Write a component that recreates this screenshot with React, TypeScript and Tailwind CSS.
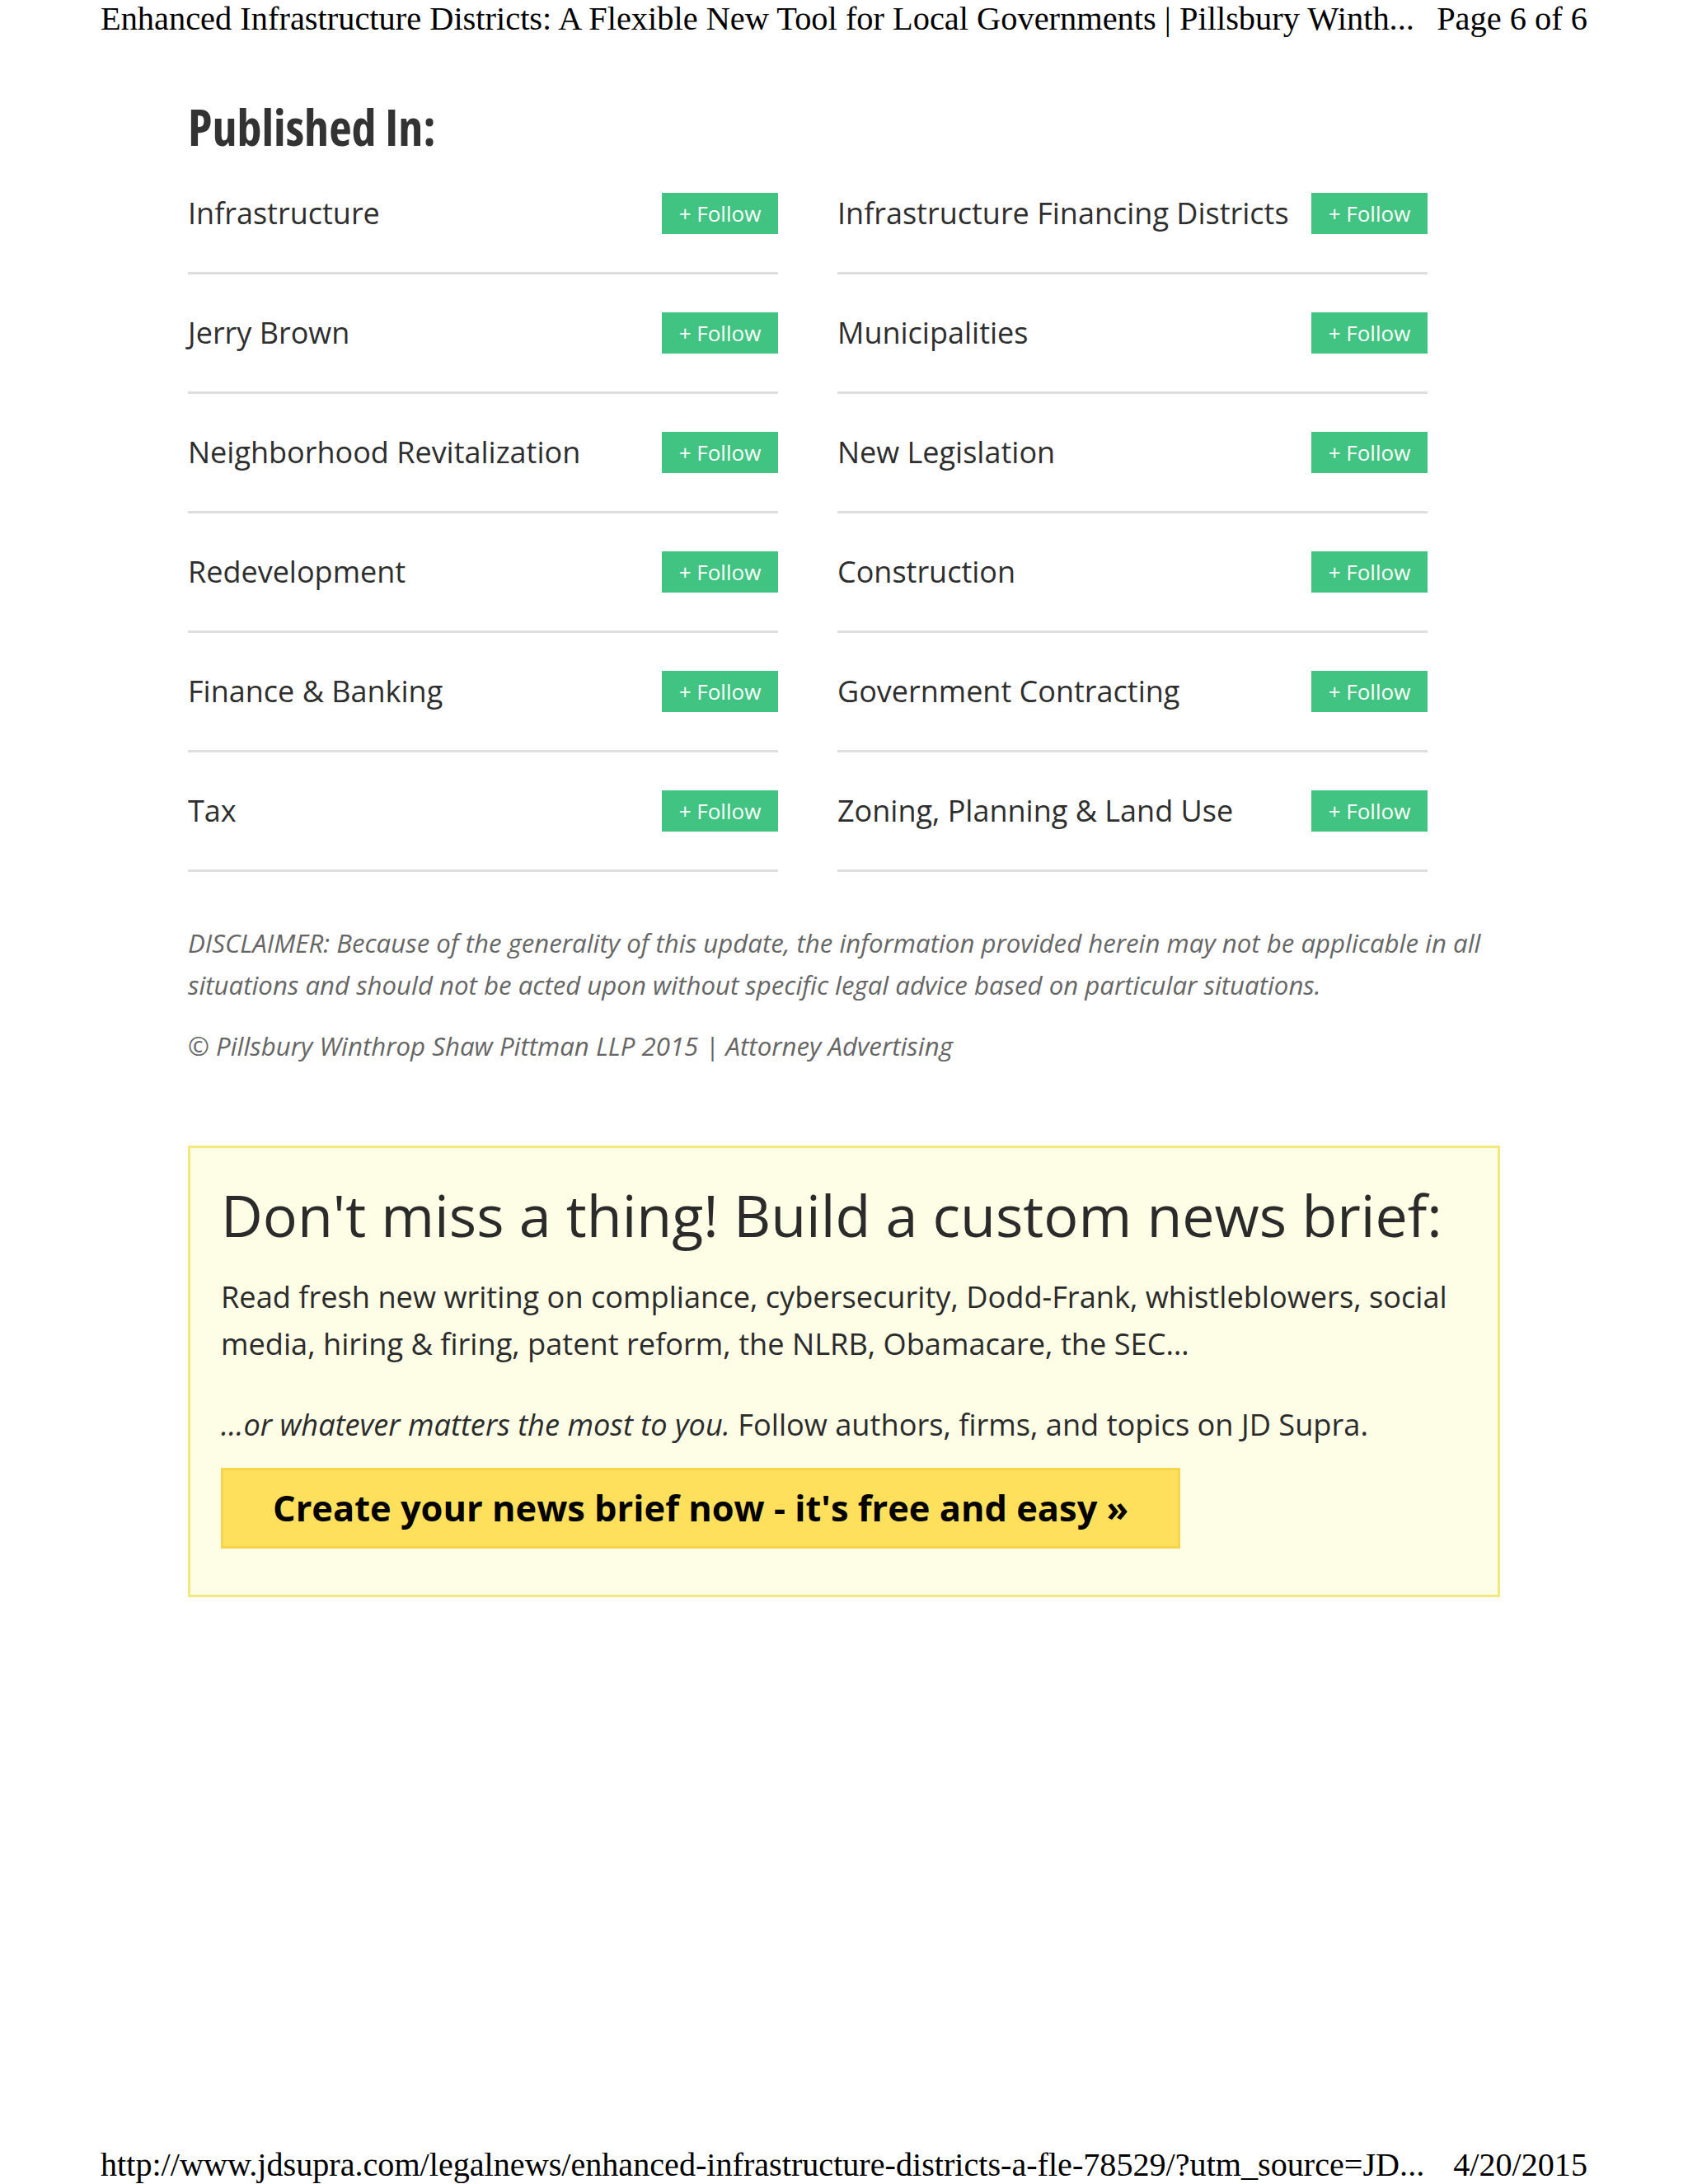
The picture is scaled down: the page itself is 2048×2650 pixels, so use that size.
import React from 'react';

const topics: [string, string][] = [
  ['Infrastructure', 'Infrastructure Financing Districts'],
  ['Jerry Brown', 'Municipalities'],
  ['Neighborhood Revitalization', 'New Legislation'],
  ['Redevelopment', 'Construction'],
  ['Finance & Banking', 'Government Contracting'],
  ['Tax', 'Zoning, Planning & Land Use'],
];

function TopicRow({ name }: { name: string }) {
  return (
    <div className="flex h-[145px] items-center justify-between border-b-[3px] border-[#dedede]">
      <span className="text-[36px] text-[#2e2e2e]">{name}</span>
      <button className="flex h-[50px] w-[141px] items-center justify-center bg-[#41c381] text-[26px] text-white">
        + Follow
      </button>
    </div>
  );
}

export default function App() {
  return (
    <div className="flex h-[2650px] w-[2048px] flex-col bg-white font-['Open_Sans',sans-serif]">
      {/* print header */}
      <div className="flex justify-between px-[122px] font-['Liberation_Serif',serif] text-[40.4px] leading-[46px] text-black">
        <span>Enhanced Infrastructure Districts: A Flexible New Tool for Local Governments | Pillsbury Winth...</span>
        <span>Page 6 of 6</span>
      </div>

      <div className="ml-[228px] w-[1592px]">
        <h2 className="mt-[78px] mb-[4px] text-[60px] leading-none font-bold font-stretch-condensed text-[#333]">
          Published In:
        </h2>

        <div className="grid w-[1504px] grid-cols-2 gap-x-[72px]">
          {topics.map(([left, right]) => (
            <React.Fragment key={left}>
              <TopicRow name={left} />
              <TopicRow name={right} />
            </React.Fragment>
          ))}
        </div>

        <p className="mt-[61px] text-[31.2px] leading-[51px] text-[#666] italic">
          DISCLAIMER: Because of the generality of this update, the information provided herein may not be applicable in all
          situations and should not be acted upon without specific legal advice based on particular situations.
        </p>
        <p className="mt-[23px] text-[31.2px] leading-[51px] text-[#666] italic">
          © Pillsbury Winthrop Shaw Pittman LLP 2015 | Attorney Advertising
        </p>

        {/* news brief promo */}
        <div className="mt-[95px] border-[3px] border-[#f4e87c] bg-[#fefde5] px-[37px] pt-[39px] pb-[56px]">
          <h3 className="text-[70px] leading-[84px] text-[#2b2b2b]">Don't miss a thing! Build a custom news brief:</h3>
          <p className="mt-[29px] text-[36.2px] leading-[57px] text-[#2b2b2b]">
            Read fresh new writing on compliance, cybersecurity, Dodd-Frank, whistleblowers, social media, hiring &amp;
            firing, patent reform, the NLRB, Obamacare, the SEC…
          </p>
          <p className="mt-[41px] text-[36.2px] leading-[57px] text-[#2b2b2b]">
            <em>…or whatever matters the most to you.</em> Follow authors, firms, and topics on JD Supra.
          </p>
          <div className="mt-[24px] inline-flex h-[98px] items-center border-[3px] border-[#f6d54c] bg-[#ffe05c] px-[60px] text-[43.4px] font-bold text-black">
            Create your news brief now - it's free and easy »
          </div>
        </div>
      </div>

      {/* print footer */}
      <div className="mt-auto flex justify-between px-[122px] font-['Liberation_Serif',serif] text-[40.15px] leading-[46px] text-black">
        <span>http://www.jdsupra.com/legalnews/enhanced-infrastructure-districts-a-fle-78529/?utm_source=JD...</span>
        <span>4/20/2015</span>
      </div>
    </div>
  );
}
